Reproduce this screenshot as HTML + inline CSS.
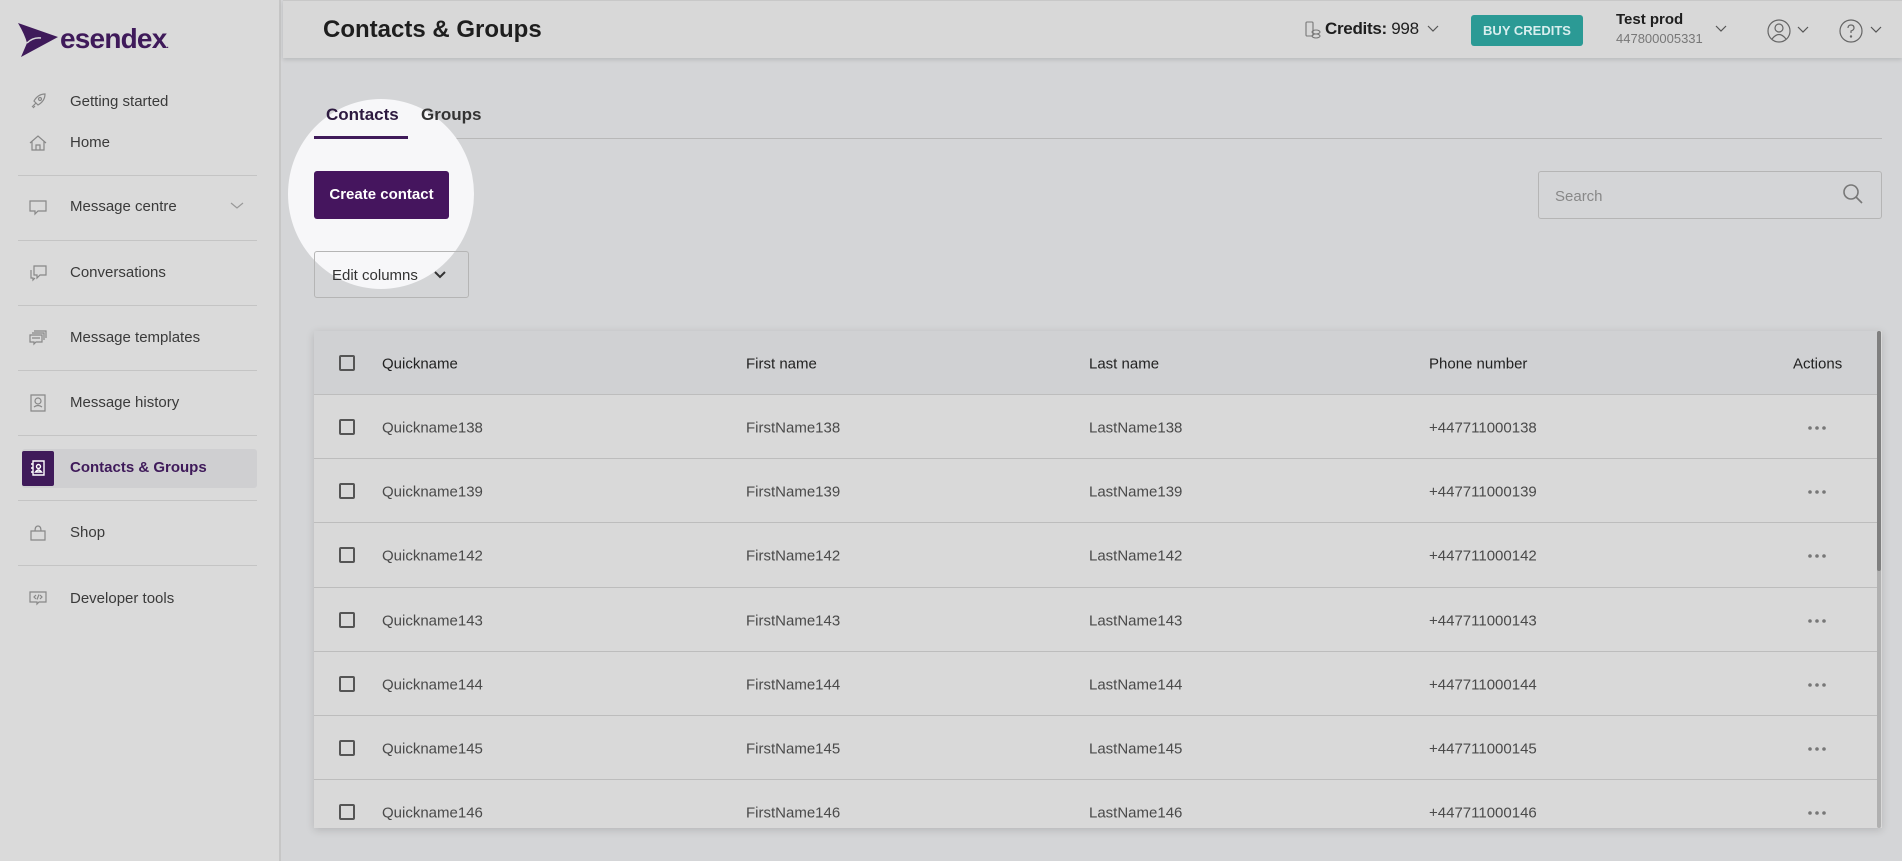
<!DOCTYPE html>
<html><head><meta charset="utf-8"><style>
*{box-sizing:border-box;margin:0;padding:0}
body{width:1902px;height:861px;overflow:hidden;background:#d4d5d7;font-family:"Liberation Sans",sans-serif;color:#333;position:relative}
.abs{position:absolute}
#side{left:0;top:0;width:281px;height:861px;background:#dadada;border-right:2px solid #c6c6c6}
.item{position:absolute;left:70px;font-size:15px;color:#3a3a3a}
.ic{position:absolute;left:28px;width:20px;height:20px}
.div{position:absolute;left:18px;width:239px;height:1px;background:#c4c4c4}
#hdr{left:283px;top:0;width:1619px;height:58px;background:#d8d8d8;box-shadow:0 2px 4px rgba(0,0,0,.12);border-top:1px solid #c8c8c8}
.row{position:absolute;left:314px;width:1563px;height:64px;border-top:1px solid #bdbdbd;background:#d9d9d9}
.row span,.hrow span{position:absolute;top:50%;transform:translateY(-45%);font-size:15px;color:#4a4a4a}
.cb{position:absolute;left:25px;top:50%;margin-top:-8px;width:16px;height:16px;border:2px solid #555;border-radius:2px}
.dots{position:absolute;left:1494px;top:50%;margin-top:-1px;width:18px;height:4px}
</style></head><body>
<div id="side" class="abs">
  <svg class="abs" style="left:17px;top:23px" width="42" height="35" viewBox="0 0 42 35"><path d="M1 0 L41 14 L4 34 L10 20 Q8 12 1 0Z" fill="#3f1a5a"/><path d="M10 20 Q16 14 24 15" stroke="#dadada" stroke-width="1.5" fill="none"/></svg>
  <div class="abs" style="left:60px;top:23px;font-size:28px;font-weight:bold;color:#3f1a5a;letter-spacing:-0.8px">esendex<span style="font-size:8px">.</span></div>
  <svg class="ic" style="top:91px" viewBox="0 0 20 20" fill="none" stroke="#888" stroke-width="1.2"><path d="M4 16 L8 12 M6 10 Q10 3 17 3 Q17 10 10 14Z M5 17 l2-2"/><circle cx="12" cy="8" r="1.5"/></svg>
  <div class="item" style="top:93px">Getting started</div>
  <svg class="ic" style="top:133px" viewBox="0 0 20 20" fill="none" stroke="#888" stroke-width="1.2"><path d="M2 10 L10 3 L18 10 M4 8 V17 H16 V8 M8 17 V12 H12 V17"/></svg>
  <div class="item" style="top:134px">Home</div>
  <div class="div" style="top:175px"></div>
  <svg class="ic" style="top:197px" viewBox="0 0 20 20" fill="none" stroke="#888" stroke-width="1.2"><path d="M2 4 H18 V14 H10 L7 17 V14 H2Z"/></svg>
  <div class="item" style="top:198px">Message centre</div>
  <svg class="abs" style="left:230px;top:202px" width="14" height="8" viewBox="0 0 14 8" fill="none" stroke="#999" stroke-width="1.2"><path d="M1 1 L7 6 L13 1"/></svg>
  <div class="div" style="top:240px"></div>
  <svg class="ic" style="top:263px" viewBox="0 0 20 20" fill="none" stroke="#888" stroke-width="1.2"><path d="M6 3 H18 V12 H12 L9 15 V12 H6Z M3 7 V15 H5 V17 L7 15"/></svg>
  <div class="item" style="top:264px">Conversations</div>
  <div class="div" style="top:305px"></div>
  <svg class="ic" style="top:328px" viewBox="0 0 20 20" fill="none" stroke="#888" stroke-width="1.2"><path d="M6 3 H18 V10 M4 5 H16 V12 M2 7 H14 V14 H8 L6 16 V14 H2Z M4 10 H12"/></svg>
  <div class="item" style="top:329px">Message templates</div>
  <div class="div" style="top:370px"></div>
  <svg class="ic" style="top:393px" viewBox="0 0 20 20" fill="none" stroke="#888" stroke-width="1.2"><path d="M3 2 H17 V18 H3Z"/><circle cx="10" cy="8" r="3"/><path d="M6 14 Q10 11 14 14"/></svg>
  <div class="item" style="top:394px">Message history</div>
  <div class="div" style="top:435px"></div>
  <div class="abs" style="left:22px;top:449px;width:235px;height:39px;background:#cfcfd1;border-radius:3px"></div>
  <div class="abs" style="left:22px;top:451px;width:32px;height:35px;background:#3f1a5a;border-radius:2px"></div>
  <svg class="abs" style="left:28px;top:458px" width="20" height="20" viewBox="0 0 20 20" fill="none" stroke="#fff" stroke-width="1.4"><path d="M5 3 H16 V17 H5Z M3 6 H5 M3 10 H5 M3 14 H5"/><circle cx="10.5" cy="8.5" r="2"/><path d="M7.5 14 Q10.5 10 13.5 14Z"/></svg>
  <div class="item" style="top:459px;font-weight:bold;color:#3f1a5a">Contacts &amp; Groups</div>
  <div class="div" style="top:500px"></div>
  <svg class="ic" style="top:523px" viewBox="0 0 20 20" fill="none" stroke="#888" stroke-width="1.2"><path d="M3 8 H17 V17 H3Z M7 8 Q7 3 10 3 Q13 3 13 8"/></svg>
  <div class="item" style="top:524px">Shop</div>
  <div class="div" style="top:565px"></div>
  <svg class="ic" style="top:588px" viewBox="0 0 20 20" fill="none" stroke="#888" stroke-width="1.2"><path d="M2 4 H18 V14 H11 L9 16 V14 H2Z M8 7 L6 9 L8 11 M12 7 L14 9 L12 11 M11 6.5 L9 11.5"/></svg>
  <div class="item" style="top:590px">Developer tools</div>
</div>

<div id="hdr" class="abs">
  <div class="abs" style="left:40px;top:15px;font-size:24px;font-weight:bold;color:#1e1e1e">Contacts &amp; Groups</div>
  <svg class="abs" style="left:1022px;top:20px" width="16" height="18" viewBox="0 0 16 18" fill="none" stroke="#777" stroke-width="1.1"><rect x="1" y="1" width="7" height="14" rx="1"/><ellipse cx="11" cy="11" rx="4" ry="2"/><ellipse cx="11" cy="15" rx="4" ry="2"/></svg>
  <div class="abs" style="left:1042px;top:18px;font-size:17px;color:#1e1e1e;letter-spacing:-0.3px"><b>Credits:</b> 998</div>
  <svg class="abs" style="left:1144px;top:24px" width="12" height="8" viewBox="0 0 12 8" fill="none" stroke="#555" stroke-width="1.2"><path d="M1 1 L6 6 L11 1"/></svg>
  <div class="abs" style="left:1188px;top:14px;width:112px;height:31px;background:#2b9a95;border-radius:3px;color:#d8eeee;font-size:13px;font-weight:bold;text-align:center;line-height:31px">BUY CREDITS</div>
  <div class="abs" style="left:1333px;top:10px;font-size:15px;font-weight:bold;color:#1e1e1e">Test prod</div>
  <div class="abs" style="left:1333px;top:30px;font-size:13px;color:#777">447800005331</div>
  <svg class="abs" style="left:1432px;top:24px" width="12" height="8" viewBox="0 0 12 8" fill="none" stroke="#555" stroke-width="1.2"><path d="M1 1 L6 6 L11 1"/></svg>
  <svg class="abs" style="left:1484px;top:17px" width="24" height="26" viewBox="0 0 24 26" fill="none" stroke="#666" stroke-width="1.2"><circle cx="12" cy="13" r="11"/><circle cx="12" cy="10" r="4"/><path d="M5 21 Q12 12 19 21"/></svg>
  <svg class="abs" style="left:1514px;top:25px" width="12" height="8" viewBox="0 0 12 8" fill="none" stroke="#555" stroke-width="1.2"><path d="M1 1 L6 6 L11 1"/></svg>
  <svg class="abs" style="left:1556px;top:17px" width="24" height="26" viewBox="0 0 24 26" fill="none" stroke="#666" stroke-width="1.2"><circle cx="12" cy="13" r="11"/><path d="M9 10 Q9 7 12 7 Q15 7 15 10 Q15 12 12 13 V15"/><circle cx="12" cy="18.5" r=".6" fill="#666"/></svg>
  <svg class="abs" style="left:1587px;top:25px" width="12" height="8" viewBox="0 0 12 8" fill="none" stroke="#555" stroke-width="1.2"><path d="M1 1 L6 6 L11 1"/></svg>
</div>

<div class="abs" style="left:314px;top:138px;width:1568px;height:1px;background:#b8b8b8"></div>
<div class="abs" style="left:288px;top:99px;width:186px;height:190px;border-radius:50%;background:#f7f7f9"></div>
<div class="abs" style="left:326px;top:105px;font-size:17px;font-weight:bold;color:#2d1a40">Contacts</div>
<div class="abs" style="left:421px;top:105px;font-size:17px;font-weight:bold;color:#333">Groups</div>
<div class="abs" style="left:314px;top:136px;width:94px;height:3px;background:#3f1a5a"></div>
<div class="abs" style="left:314px;top:171px;width:135px;height:48px;background:#45155e;border-radius:3px;color:#fff;font-size:15px;font-weight:bold;text-align:center;line-height:48px">Create contact</div>
<div class="abs" style="left:314px;top:251px;width:155px;height:47px;border:1px solid #b5b5b5;border-radius:3px;font-size:15px;color:#333;padding:15px 0 0 17px">Edit columns</div>
<svg class="abs" style="left:434px;top:271px" width="12" height="8" viewBox="0 0 12 8" fill="none" stroke="#333" stroke-width="2"><path d="M1 1 L6 6 L11 1"/></svg>
<div class="abs" style="left:1538px;top:171px;width:344px;height:48px;border:1px solid #b5b5b5;border-radius:3px;font-size:15px;color:#888;padding:16px 0 0 16px">Search</div>
<svg class="abs" style="left:1842px;top:183px" width="22" height="22" viewBox="0 0 22 22" fill="none" stroke="#777" stroke-width="1.6"><circle cx="9" cy="9" r="7"/><path d="M14 14 L20 20"/></svg>

<div class="abs" style="left:314px;top:331px;width:1568px;height:497px;box-shadow:0 2px 8px rgba(0,0,0,.15);background:#d9d9d9"></div>
<div class="hrow abs" style="left:314px;top:331px;width:1563px;height:63px;background:#d0d1d3">
  <div class="cb"></div>
  <span style="left:68px;color:#222">Quickname</span>
  <span style="left:432px;color:#222">First name</span>
  <span style="left:775px;color:#222">Last name</span>
  <span style="left:1115px;color:#222">Phone number</span>
  <span style="left:1479px;color:#222">Actions</span>
</div>
<div class="row" style="top:394px"><div class="cb"></div><span style="left:68px">Quickname138</span><span style="left:432px">FirstName138</span><span style="left:775px">LastName138</span><span style="left:1115px">+447711000138</span><svg class="dots" viewBox="0 0 18 4"><circle cx="2" cy="2" r="1.8" fill="#777"/><circle cx="9" cy="2" r="1.8" fill="#777"/><circle cx="16" cy="2" r="1.8" fill="#777"/></svg></div>
<div class="row" style="top:458px"><div class="cb"></div><span style="left:68px">Quickname139</span><span style="left:432px">FirstName139</span><span style="left:775px">LastName139</span><span style="left:1115px">+447711000139</span><svg class="dots" viewBox="0 0 18 4"><circle cx="2" cy="2" r="1.8" fill="#777"/><circle cx="9" cy="2" r="1.8" fill="#777"/><circle cx="16" cy="2" r="1.8" fill="#777"/></svg></div>
<div class="row" style="top:522px"><div class="cb"></div><span style="left:68px">Quickname142</span><span style="left:432px">FirstName142</span><span style="left:775px">LastName142</span><span style="left:1115px">+447711000142</span><svg class="dots" viewBox="0 0 18 4"><circle cx="2" cy="2" r="1.8" fill="#777"/><circle cx="9" cy="2" r="1.8" fill="#777"/><circle cx="16" cy="2" r="1.8" fill="#777"/></svg></div>
<div class="row" style="top:587px"><div class="cb"></div><span style="left:68px">Quickname143</span><span style="left:432px">FirstName143</span><span style="left:775px">LastName143</span><span style="left:1115px">+447711000143</span><svg class="dots" viewBox="0 0 18 4"><circle cx="2" cy="2" r="1.8" fill="#777"/><circle cx="9" cy="2" r="1.8" fill="#777"/><circle cx="16" cy="2" r="1.8" fill="#777"/></svg></div>
<div class="row" style="top:651px"><div class="cb"></div><span style="left:68px">Quickname144</span><span style="left:432px">FirstName144</span><span style="left:775px">LastName144</span><span style="left:1115px">+447711000144</span><svg class="dots" viewBox="0 0 18 4"><circle cx="2" cy="2" r="1.8" fill="#777"/><circle cx="9" cy="2" r="1.8" fill="#777"/><circle cx="16" cy="2" r="1.8" fill="#777"/></svg></div>
<div class="row" style="top:715px"><div class="cb"></div><span style="left:68px">Quickname145</span><span style="left:432px">FirstName145</span><span style="left:775px">LastName145</span><span style="left:1115px">+447711000145</span><svg class="dots" viewBox="0 0 18 4"><circle cx="2" cy="2" r="1.8" fill="#777"/><circle cx="9" cy="2" r="1.8" fill="#777"/><circle cx="16" cy="2" r="1.8" fill="#777"/></svg></div>
<div class="row" style="top:779px;height:49px;overflow:hidden"><div class="cb" style="top:32px"></div><span style="left:68px;top:32px">Quickname146</span><span style="left:432px;top:32px">FirstName146</span><span style="left:775px;top:32px">LastName146</span><span style="left:1115px;top:32px">+447711000146</span><svg class="dots" style="top:32px" viewBox="0 0 18 4"><circle cx="2" cy="2" r="1.8" fill="#777"/><circle cx="9" cy="2" r="1.8" fill="#777"/><circle cx="16" cy="2" r="1.8" fill="#777"/></svg></div>
<div class="abs" style="left:1877px;top:331px;width:4px;height:497px;background:#b0b0b0;border-radius:2px"></div>
<div class="abs" style="left:1877px;top:331px;width:4px;height:240px;background:#7f7f7f;border-radius:2px"></div>
</body></html>
